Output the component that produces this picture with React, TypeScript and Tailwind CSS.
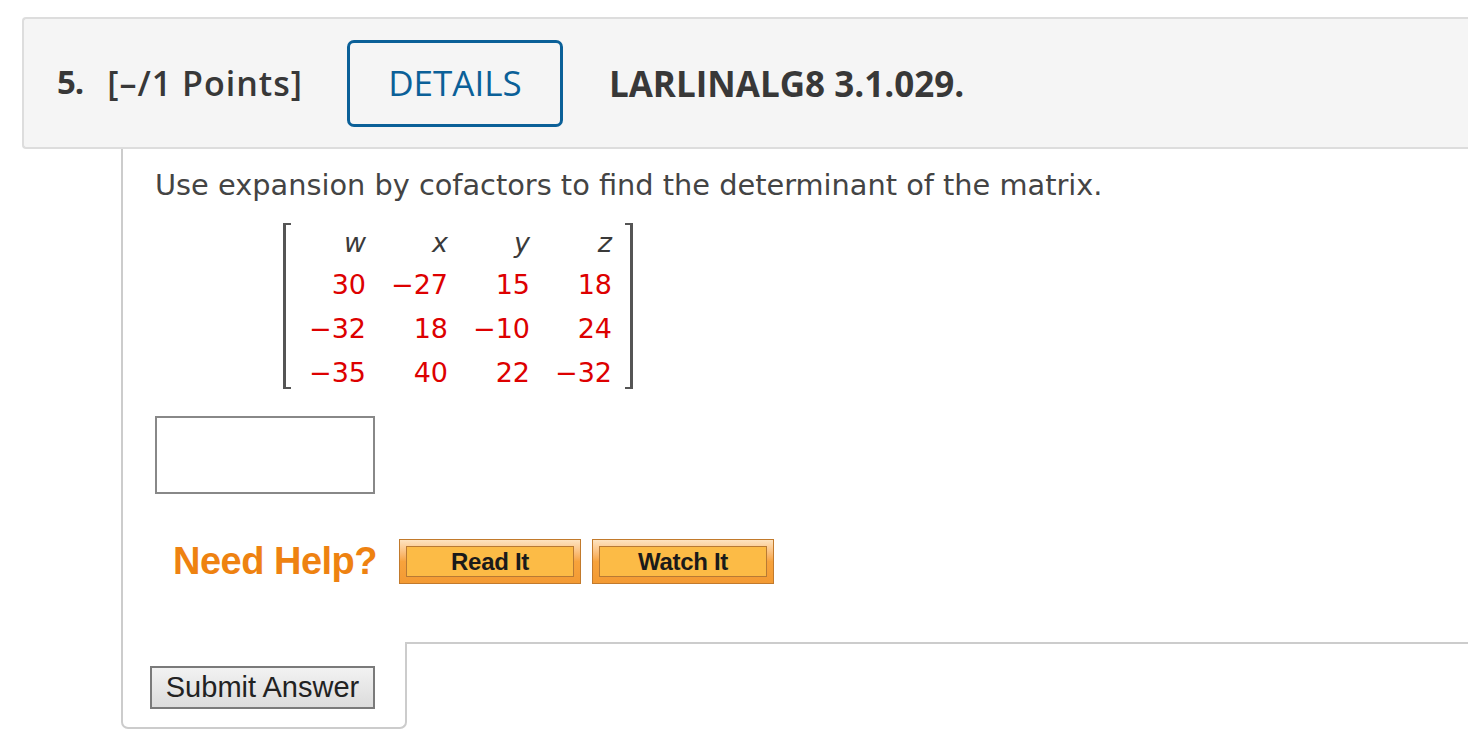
import React from 'react';

const headers = ['w', 'x', 'y', 'z'];
const rows = [
  ['30', '−27', '15', '18'],
  ['−32', '18', '−10', '24'],
  ['−35', '40', '22', '−32'],
];

const HelpButton: React.FC<{ label: string }> = ({ label }) => (
  <button className="w-[182px] h-[45px] border border-[#c27a2c] bg-gradient-to-b from-[#fde3c0] via-[#f7a33c] to-[#f39a33] p-[6px]">
    <span className="flex h-full items-center justify-center border border-[#b87a34] bg-[#fcbb46] font-['Liberation_Sans',Arial,sans-serif] text-[24px] font-bold text-[#1a1a1a] tracking-[-0.3px]">
      {label}
    </span>
  </button>
);

const Bracket: React.FC<{ side: 'l' | 'r' }> = ({ side }) => (
  <div
    className={
      side === 'l'
        ? 'w-[8px] h-[166px] border-l-[3px] border-t-2 border-b-2 border-[#555]'
        : 'w-[8px] h-[166px] border-r-[3px] border-t-2 border-b-2 border-[#555]'
    }
  />
);

export default function App() {
  return (
    <div className="w-[1468px] h-[745px] overflow-hidden bg-white pt-[17px] pl-[22px]">
      {/* question header */}
      <div className="h-[132px] flex items-center pl-[33px] bg-[#f5f5f5] border-2 border-r-0 border-[#dddddd] rounded-l-[4px] text-[#383838]">
        <span className="font-['Open_Sans',sans-serif] font-bold text-[33px] tracking-[-1px] leading-none -mt-[4px]">5.</span>
        <span className="ml-[24px] font-['Open_Sans',sans-serif] font-semibold text-[34px] tracking-[1px] leading-none">[–/1 Points]</span>
        <button className="ml-[44px] w-[216px] h-[87px] border-[3px] border-[#0b6098] rounded-[7px] text-[#0b6098] font-['Open_Sans',sans-serif] font-medium text-[35px]">
          DETAILS
        </button>
        <span className="ml-[46px] font-['Open_Sans',sans-serif] font-bold text-[35px] leading-none">
          LARLINALG8 3.1.029.
        </span>
      </div>

      {/* question body */}
      <div className="ml-[99px]">
        <div className="h-[493px] border-l-2 border-[#cccccc] pl-[32px] pt-[19px]">
          <p className="font-['DejaVu_Sans',Verdana,sans-serif] text-[28.8px] leading-[35px] text-[#444444]">
            Use expansion by cofactors to find the determinant of the matrix.
          </p>

          <div className="ml-[128px] mt-[20px] flex items-start font-['DejaVu_Sans',Verdana,sans-serif] text-[27px]">
            <Bracket side="l" />
            <div className="grid grid-cols-[75px_82px_82px_82px] text-right">
              {headers.map((h) => (
                <div key={h} className="h-[40px] leading-[40px] italic text-[#3a3a3a]">
                  {h}
                </div>
              ))}
              {rows.map((r, i) =>
                r.map((v, j) => (
                  <div key={`${i}-${j}`} className="h-[44px] leading-[44px] text-[#dd0000]">
                    {v}
                  </div>
                ))
              )}
            </div>
            <div className="ml-[13px]">
              <Bracket side="r" />
            </div>
          </div>

          <input
            type="text"
            className="block mt-[21px] w-[220px] h-[78px] border-2 border-[#888888] bg-white"
          />

          <div className="mt-[39px] flex items-center">
            <span className="ml-[18px] mr-[22px] font-['Liberation_Sans',Arial,sans-serif] font-bold text-[38px] text-[#ee8211] tracking-[-0.5px]">
              Need Help?
            </span>
            <HelpButton label="Read It" />
            <div className="w-[11px]" />
            <HelpButton label="Watch It" />
          </div>
        </div>

        <div className="flex h-[87px]">
          <div className="w-[286px] border-l-2 border-r-2 border-b-2 border-[#cccccc] rounded-b-[7px] pl-[27px] pt-[24px]">
            <button className="w-[225px] h-[43px] border-2 border-[#7a7a7a] bg-gradient-to-b from-[#f2f2f2] to-[#dcdcdc] font-['Liberation_Sans',Arial,sans-serif] text-[29px] text-[#222] leading-none">
              Submit Answer
            </button>
          </div>
          <div className="flex-1 border-t-2 border-[#cccccc]" />
        </div>
      </div>
    </div>
  );
}
